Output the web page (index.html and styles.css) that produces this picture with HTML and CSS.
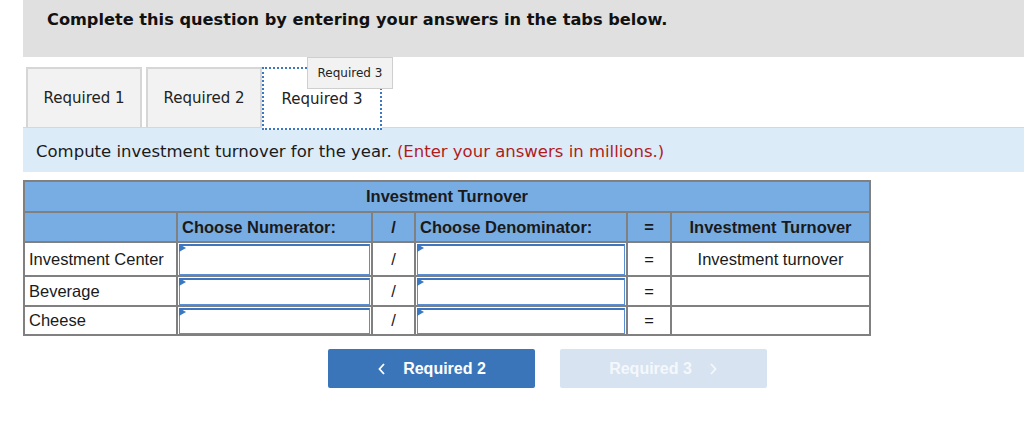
FILE: index.html
```html
<!DOCTYPE html>
<html lang="en">
<head>
    <meta charset="UTF-8">
    <meta name="viewport" content="width=device-width, initial-scale=1.0">
    <title>Investment Turnover</title>
    <link rel="stylesheet" href="styles.css">
</head>
<body>
    <div class="banner">
        <h1 class="banner-title">Complete this question by entering your answers in the tabs below.</h1>
    </div>

    <div class="tabs">
        <div class="tab">Required 1</div>
        <div class="tab">Required 2</div>
        <div class="tab tab-active">
            Required 3
            <span class="tooltip">Required 3</span>
        </div>
    </div>

    <div class="instruction">
        Compute investment turnover for the year. <span class="note">(Enter your answers in millions.)</span>
    </div>

    <table class="grid">
        <colgroup>
            <col class="c-label">
            <col class="c-num">
            <col class="c-op">
            <col class="c-den">
            <col class="c-eq">
            <col class="c-res">
        </colgroup>
        <thead>
            <tr class="head-title">
                <th colspan="6">Investment Turnover</th>
            </tr>
            <tr class="head-cols">
                <th></th>
                <th class="left">Choose Numerator:</th>
                <th>/</th>
                <th class="left">Choose Denominator:</th>
                <th>=</th>
                <th>Investment Turnover</th>
            </tr>
        </thead>
        <tbody>
            <tr class="row-tall">
                <td>Investment Center</td>
                <td class="field"><div class="input"></div></td>
                <td class="op">/</td>
                <td class="field"><div class="input"></div></td>
                <td class="op">=</td>
                <td class="result">Investment turnover</td>
            </tr>
            <tr>
                <td>Beverage</td>
                <td class="field"><div class="input"></div></td>
                <td class="op">/</td>
                <td class="field"><div class="input"></div></td>
                <td class="op">=</td>
                <td class="result"></td>
            </tr>
            <tr class="row-last">
                <td>Cheese</td>
                <td class="field"><div class="input"></div></td>
                <td class="op">/</td>
                <td class="field"><div class="input"></div></td>
                <td class="op">=</td>
                <td class="result"></td>
            </tr>
        </tbody>
    </table>

    <div class="nav">
        <button class="nav-button">
            <svg class="chev" width="10" height="14" viewBox="0 0 10 14"><path d="M7 2 L2.5 7 L7 12" fill="none" stroke="currentColor" stroke-width="1.8"/></svg>
            Required 2
        </button>
        <button class="nav-button disabled">
            Required 3
            <svg class="chev" width="10" height="14" viewBox="0 0 10 14"><path d="M3 2 L7.5 7 L3 12" fill="none" stroke="currentColor" stroke-width="1.8"/></svg>
        </button>
    </div>
</body>
</html>
```

FILE: styles.css
```css
body {
    margin: 0;
    padding: 0;
    background-color: #ffffff;
    font-family: "DejaVu Sans", Verdana, sans-serif;
    color: #1a1a1a;
}
.banner {
    margin-left: 23px;
    height: 57px;
    background-color: #e0e0e0;
    box-sizing: border-box;
    padding: 10px 0 0 24px;
}
.banner-title {
    margin: 0;
    font-size: 16.2px;
    font-weight: bold;
    color: #111;
}
.tabs {
    display: flex;
    margin: 10px 0 0 26px;
    height: 60px;
}
.tab {
    position: relative;
    width: 116px;
    height: 60px;
    box-sizing: border-box;
    margin-right: 4px;
    background-color: #f2f2f2;
    border: 2px solid #d6d6d6;
    border-bottom: none;
    font-size: 15px;
    display: flex;
    align-items: center;
    justify-content: center;
    color: #222;
}
.tab-active {
    width: 120px;
    height: 63px;
    margin-left: -4px;
    background-color: #ffffff;
    border: 2px dotted #3a78c4;
    z-index: 1;
}
.tooltip {
    position: absolute;
    left: 43px;
    top: -12px;
    width: 86px;
    height: 32px;
    box-sizing: border-box;
    background-color: #f2f2f2;
    border: 1px solid #cfcfcf;
    font-size: 12px;
    display: flex;
    align-items: center;
    justify-content: center;
}
.instruction {
    margin-left: 23px;
    height: 45px;
    background-color: #dcebf8;
    box-sizing: border-box;
    padding: 14px 0 0 13px;
    font-size: 16.5px;
    border-top: 1px solid #cfd9e4;
}
.note {
    color: #b01c1c;
}
.grid {
    margin: 8px 0 0 23px;
    border-collapse: collapse;
    width: 848px;
    font-family: "Liberation Sans", Arial, sans-serif;
    font-size: 16.5px;
    border: 2px solid #808080;
}
.c-label { width: 153px; }
.c-num { width: 195px; }
.c-op { width: 43px; }
.c-den { width: 212px; }
.c-eq { width: 44px; }
.c-res { width: 199px; }
.grid th, .grid td {
    border: 2px solid #808080;
    padding: 0 4px;
}
.grid th {
    background-color: #78ade4;
    font-weight: bold;
    color: #1a1a1a;
}
.head-title th {
    height: 29px;
}
.head-cols th {
    height: 28px;
}
.grid th.left {
    text-align: left;
}
.grid td {
    text-align: left;
    padding-top: 0;
    padding-bottom: 0;
}
.grid td.op,
.grid td.result {
    text-align: center;
}
.grid td.field {
    padding: 0;
    position: relative;
    vertical-align: top;
}
.input {
    box-sizing: border-box;
    height: 27px;
    margin: 1px 1px 0;
    border: 1px solid #5a8fd6;
    border-top: 2px solid #3f76c0;
    background-color: #ffffff;
}
.row-tall .input {
    height: 31px;
}
.row-last .input {
    height: 26px;
}
.field::before {
    content: "";
    position: absolute;
    left: 1px;
    top: 1px;
    border-top: 4px solid transparent;
    border-bottom: 4px solid transparent;
    border-left: 7px solid #3a78c4;
}
.nav {
    display: flex;
    gap: 25px;
    margin: 13px 0 0 328px;
}
.nav-button {
    width: 207px;
    height: 39px;
    border: none;
    border-radius: 2px;
    background-color: #3a75b9;
    color: #ffffff;
    font-family: "Liberation Sans", Arial, sans-serif;
    font-size: 16px;
    font-weight: bold;
    display: flex;
    align-items: center;
    justify-content: center;
    gap: 16px;
    cursor: pointer;
}
.nav-button.disabled {
    background-color: #d7e3f1;
    color: #f4f8fc;
}
```
